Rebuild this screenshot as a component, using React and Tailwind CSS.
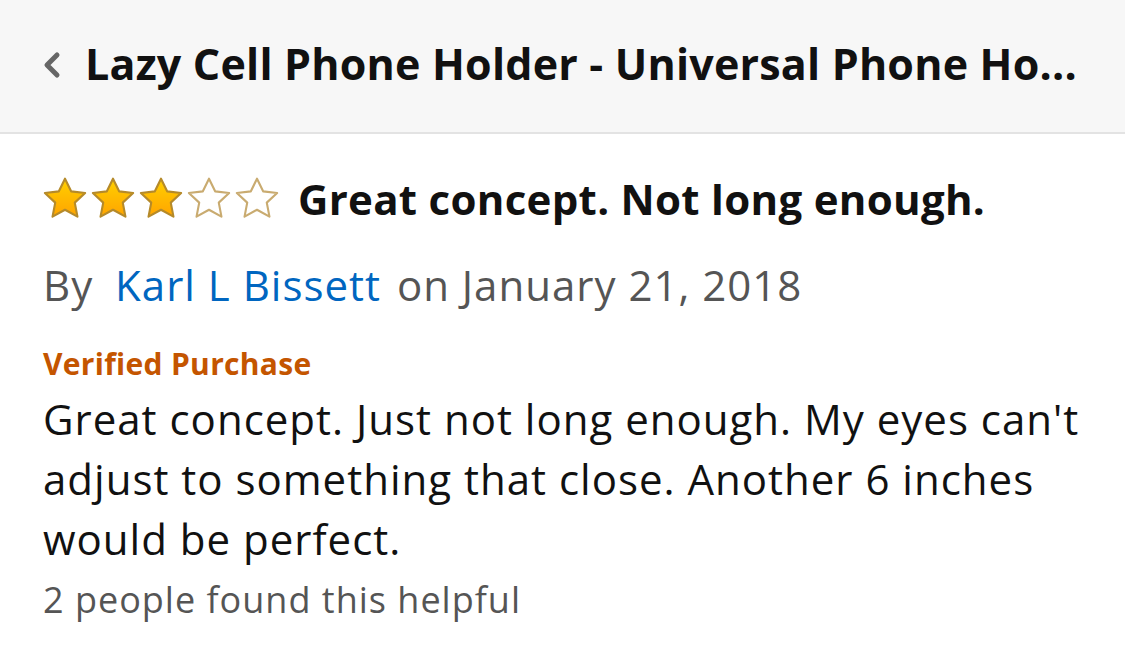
function Star({ filled }) {
  return (
    <svg viewBox="0 0 24 24" className="w-[48px] h-[46px]">
      <defs>
        <linearGradient id="starFill" x1="0" y1="0" x2="0" y2="1">
          <stop offset="0%" stopColor="#ffd000" />
          <stop offset="100%" stopColor="#ffa400" />
        </linearGradient>
      </defs>
      <path
        d="M12 1.4l3.2 6.6 7.3.9-5.4 5 1.4 7.3L12 17.6l-6.5 3.6 1.4-7.3-5.4-5 7.3-.9z"
        fill={filled ? 'url(#starFill)' : '#ffffff'}
        stroke={filled ? '#b58a2a' : '#c9ab70'}
        strokeWidth="1.1"
        strokeLinejoin="round"
      />
    </svg>
  );
}

export default function App() {
  const font = { fontFamily: '"Open Sans", Lato, sans-serif' };
  return (
    <div className="w-[1125px] h-[659px] bg-white overflow-hidden" style={font}>
      <div className="h-[134px] bg-[#f7f7f7] border-b-2 border-[#e3e3e3] flex items-center pl-[41px] pr-[30px]">
        <svg viewBox="0 0 20 28" className="w-[20px] h-[28px] shrink-0 -mt-[2px]">
          <path d="M16 4 L6 14 L16 24" fill="none" stroke="#666" strokeWidth="5" strokeLinecap="round" strokeLinejoin="round" />
        </svg>
        <h1 className="ml-[24px] text-[43px] font-bold tracking-[0.2px] text-[#111] whitespace-nowrap leading-none -mt-[6px]">
          Lazy Cell Phone Holder - Universal Phone Ho...
        </h1>
      </div>
      <div className="px-[43px] pt-[42px]">
        <div className="flex items-center">
          <div className="flex -ml-[2px]">
            <Star filled />
            <Star filled />
            <Star filled />
            <Star />
            <Star />
          </div>
          <h2 className="ml-[17px] text-[42px] font-bold tracking-[0.3px] text-[#111] leading-none">Great concept. Not long enough.</h2>
        </div>
        <div className="mt-[42px] text-[42px] tracking-[1px] text-[#555] leading-none">
          By <span className="ml-[10px] text-[#0066c0]">Karl L Bissett</span> <span className="ml-[4px]">on January 21, 2018</span>
        </div>
        <div className="mt-[43px] text-[30px] font-bold tracking-[0.3px] text-[#c45500] leading-none">Verified Purchase</div>
        <p className="mt-[10px] text-[42px] tracking-[1px] leading-[60px] text-[#111]">
          Great concept. Just not long enough. My eyes can't adjust to something that close. Another 6 inches would be perfect.
        </p>
        <div className="mt-[13px] text-[36px] tracking-[1px] text-[#555] leading-none">2 people found this helpful</div>
      </div>
    </div>
  );
}
